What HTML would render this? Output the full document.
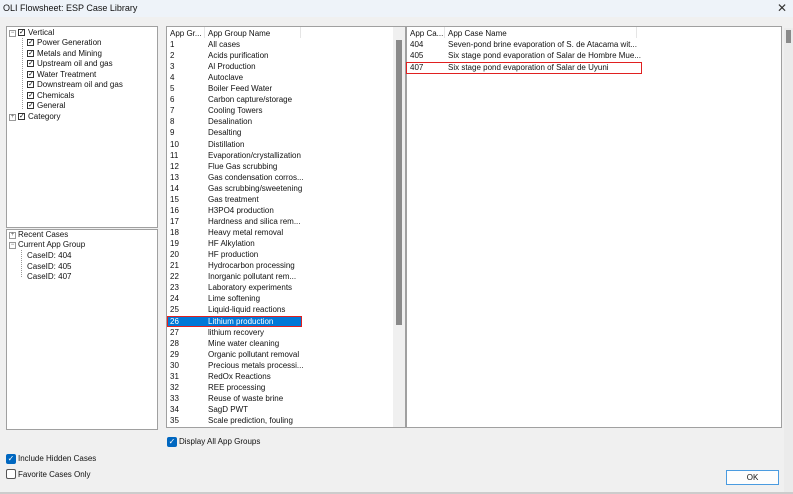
<!DOCTYPE html>
<html><head><meta charset="utf-8"><style>
*{margin:0;padding:0;box-sizing:border-box}
body{width:793px;height:494px;background:#f0f0f0;font-family:"Liberation Sans",sans-serif;font-size:8px;color:#111;position:relative;overflow:hidden}
.a{position:absolute;white-space:nowrap}
.title{left:0;top:0;width:793px;height:17px;background:#eef3f9}
.box{position:absolute;background:#fff;border:1px solid #a0a0a0}
.cb{position:absolute;width:7px;height:7px;border:1px solid #333;background:#fff;font-size:7px;line-height:6px;text-align:center}
.bcb{position:absolute;width:10px;height:10px;border-radius:2px;background:#0067c0;color:#fff;font-size:8px;line-height:10px;text-align:center}
.row{position:absolute;height:11px;line-height:11px}
</style></head><body>
<div class="a title"></div>
<div class="a" style="left:3px;top:3px;font-size:9px">OLI Flowsheet: ESP Case Library</div>
<div class="a" style="left:777px;top:1px;font-size:12px;color:#333">✕</div>

<!-- left top tree -->
<div class="box" style="left:6px;top:26px;width:152px;height:202px"></div>
<div class="a" style="left:9px;top:30px;width:7px;height:7px;border:1px solid #999;font-size:6px;line-height:5px;text-align:center;color:#555">−</div>
<div class="cb" style="left:18px;top:29px">✓</div><div class="a" style="left:28px;top:28px">Vertical</div>
<div class="a" style="left:22px;top:38px;width:1px;height:71px;border-left:1px dotted #999"></div>
<div class="cb" style="left:27px;top:39px">✓</div><div class="a" style="left:37px;top:38px">Power Generation</div>
<div class="cb" style="left:27px;top:50px">✓</div><div class="a" style="left:37px;top:49px">Metals and Mining</div>
<div class="cb" style="left:27px;top:60px">✓</div><div class="a" style="left:37px;top:59px">Upstream oil and gas</div>
<div class="cb" style="left:27px;top:71px">✓</div><div class="a" style="left:37px;top:70px">Water Treatment</div>
<div class="cb" style="left:27px;top:81px">✓</div><div class="a" style="left:37px;top:80px">Downstream oil and gas</div>
<div class="cb" style="left:27px;top:92px">✓</div><div class="a" style="left:37px;top:91px">Chemicals</div>
<div class="cb" style="left:27px;top:102px">✓</div><div class="a" style="left:37px;top:101px">General</div>
<div class="a" style="left:9px;top:114px;width:7px;height:7px;border:1px solid #999;font-size:6px;line-height:5px;text-align:center;color:#555">+</div>
<div class="cb" style="left:18px;top:113px">✓</div><div class="a" style="left:28px;top:112px">Category</div>

<!-- left bottom -->
<div class="box" style="left:6px;top:229px;width:152px;height:201px"></div>
<div class="a" style="left:9px;top:232px;width:7px;height:7px;border:1px solid #999;font-size:6px;line-height:5px;text-align:center;color:#555">+</div>
<div class="a" style="left:18px;top:230px">Recent Cases</div>
<div class="a" style="left:9px;top:242px;width:7px;height:7px;border:1px solid #999;font-size:6px;line-height:5px;text-align:center;color:#555">−</div>
<div class="a" style="left:18px;top:240px">Current App Group</div>
<div class="a" style="left:21px;top:250px;height:27px;border-left:1px dotted #999"></div>
<div class="a" style="left:27px;top:251px">CaseID: 404</div>
<div class="a" style="left:27px;top:262px">CaseID: 405</div>
<div class="a" style="left:27px;top:272px">CaseID: 407</div>

<!-- middle list -->
<div class="box" style="left:166px;top:26px;width:240px;height:402px"></div>
<div class="a" style="left:204px;top:27px;height:11px;border-left:1px solid #e5e5e5"></div>
<div class="a" style="left:300px;top:27px;height:11px;border-left:1px solid #e5e5e5"></div>
<div class="a" style="left:393px;top:27px;width:12px;height:400px;background:#f0f0f0"></div>
<div class="a" style="left:396px;top:40px;width:6px;height:285px;background:#8a8a8a"></div>
<div class="a" style="left:170px;top:29px">App Gr...</div>
<div class="a" style="left:208px;top:29px">App Group Name</div>
<div class="a" style="left:167px;top:316px;width:135px;height:11px;background:#0078d7;border:1px solid #e02020"></div>
<div id="mid"></div>

<!-- right list -->
<div class="box" style="left:406px;top:26px;width:376px;height:402px"></div>
<div class="a" style="left:444px;top:27px;height:11px;border-left:1px solid #e5e5e5"></div>
<div class="a" style="left:636px;top:27px;height:11px;border-left:1px solid #e5e5e5"></div>
<div class="a" style="left:410px;top:29px">App Ca...</div>
<div class="a" style="left:448px;top:29px">App Case Name</div>
<div class="a" style="left:410px;top:40px">404</div><div class="a" style="left:448px;top:40px">Seven-pond brine evaporation of S. de Atacama wit...</div>
<div class="a" style="left:410px;top:51px">405</div><div class="a" style="left:448px;top:51px">Six stage pond evaporation of Salar de Hombre Mue...</div>
<div class="a" style="left:406px;top:62px;width:236px;height:12px;border:1.5px solid #e02020"></div>
<div class="a" style="left:410px;top:63px">407</div><div class="a" style="left:448px;top:63px">Six stage pond evaporation of Salar de Uyuni</div>

<div class="a" style="left:784px;top:28px;width:9px;height:466px;background:#ebebeb"></div>
<div class="a" style="left:786px;top:30px;width:5px;height:13px;background:#8a8a8a"></div>

<!-- bottom -->
<div class="bcb" style="left:167px;top:437px">✓</div><div class="a" style="left:179px;top:437px">Display All App Groups</div>
<div class="bcb" style="left:6px;top:454px">✓</div><div class="a" style="left:18px;top:454px">Include Hidden Cases</div>
<div class="a" style="left:6px;top:469px;width:10px;height:10px;border:1px solid #555;border-radius:2px;background:#fff"></div><div class="a" style="left:18px;top:470px">Favorite Cases Only</div>
<div class="a" style="left:726px;top:470px;width:53px;height:15px;background:#fdfdfd;border:1px solid #4a9be0;text-align:center;line-height:13px">OK</div>
<div class="a" style="left:0;top:492px;width:793px;height:2px;background:#ccc"></div>

<script>
var n=["All cases","Acids purification","Al Production","Autoclave","Boiler Feed Water","Carbon capture/storage","Cooling Towers","Desalination","Desalting","Distillation","Evaporation/crystallization","Flue Gas scrubbing","Gas condensation corros...","Gas scrubbing/sweetening","Gas treatment","H3PO4 production","Hardness and silica rem...","Heavy metal removal","HF Alkylation","HF production","Hydrocarbon processing","Inorganic pollutant rem...","Laboratory experiments","Lime softening","Liquid-liquid reactions","Lithium production","lithium recovery","Mine water cleaning","Organic pollutant removal","Precious metals processi...","RedOx Reactions","REE processing","Reuse of waste brine","SagD PWT","Scale prediction, fouling"];
var h="";for(var i=0;i<n.length;i++){var y=40+i*11.06;var c=i==25?"color:#fff;":"";h+='<div class="a" style="'+c+'left:170px;top:'+y+'px">'+(i+1)+'</div><div class="a" style="'+c+'left:208px;top:'+y+'px">'+n[i]+'</div>';}
document.getElementById("mid").outerHTML=h;
</script>
</body></html>
